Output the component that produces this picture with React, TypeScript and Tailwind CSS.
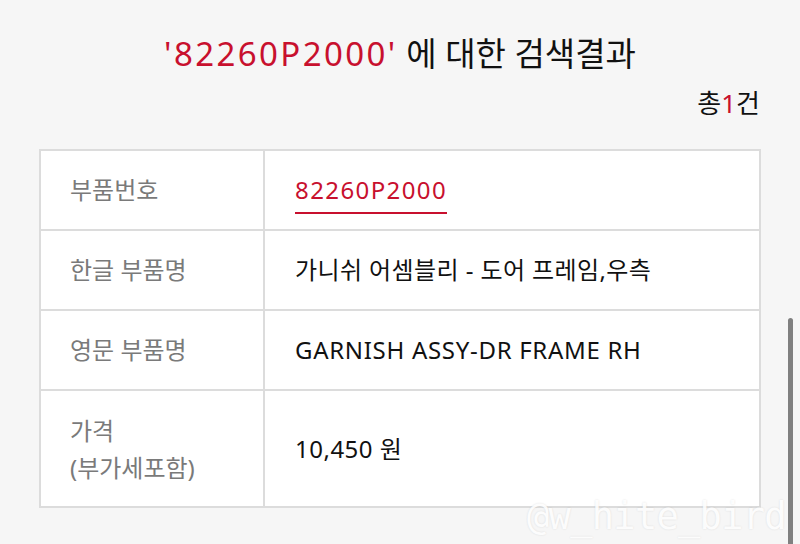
export default function App() {
  const rows = [
    { label: '부품번호', value: '82260P2000', link: true, latin: true },
    { label: '한글 부품명', value: '가니쉬 어셈블리 - 도어 프레임,우측' },
    { label: '영문 부품명', value: 'GARNISH ASSY-DR FRAME RH', latin: true },
  ];

  return (
    <div className="relative w-[800px] h-[544px] overflow-hidden bg-[#f6f6f6] font-['Noto_Sans','Noto_Sans_CJK_KR',sans-serif]">
      {/* Title */}
      <div className="pt-[32px] text-center text-[33px] leading-[44px] text-[#111]">
        <span className="text-[#c8102e] tracking-[2.4px]">'82260P2000'</span> 에 대한 검색결과
      </div>

      {/* Count */}
      <div className="mt-[10px] pr-[40px] text-right text-[26px] leading-[34px] text-[#111]">
        총<span className="text-[#c8102e]">1</span>건
      </div>

      {/* Table */}
      <div className="mx-[39px] mt-[29px] w-[722px] border-2 border-[#dcdcdc] bg-white">
        {rows.map((r) => (
          <div key={r.label} className="flex h-[80px] border-b-2 border-[#dcdcdc]">
            <div className="flex w-[224px] items-center border-r-2 border-[#dcdcdc] pl-[29px] text-[24px] text-[#7a7a7a]">
              {r.label}
            </div>
            <div
              className={`flex flex-1 items-center pl-[30px] text-[24px] text-[#111] ${r.link ? 'tracking-[1.4px]' : r.latin ? 'tracking-[0.7px]' : 'tracking-[0.4px]'}`}
            >
              {r.link ? (
                <span className="border-b-2 border-[#c8102e] pb-[4px] text-[#c8102e] translate-y-[3px]">
                  {r.value}
                </span>
              ) : (
                r.value
              )}
            </div>
          </div>
        ))}
        <div className="flex h-[115px]">
          <div className="flex w-[224px] flex-col justify-center border-r-2 border-[#dcdcdc] pl-[29px] text-[24px] leading-[37px] text-[#7a7a7a]">
            <span>가격</span>
            <span>(부가세포함)</span>
          </div>
          <div className="flex flex-1 items-center pl-[30px] text-[24px] tracking-[0.5px] text-[#111]">10,450 원</div>
        </div>
      </div>

      {/* Scrollbar */}
      <div className="absolute right-[7px] top-[318px] h-[230px] w-[5px] rounded-full bg-[#808080]" />

      {/* Watermark */}
      <div className="absolute left-[527px] top-[496px] font-['DejaVu_Sans_Mono',monospace] text-[37px] leading-[42px] tracking-[-0.7px] text-white/90 [text-shadow:0_0_2px_rgba(0,0,0,0.12)]">
        @w_hite_bird
      </div>
    </div>
  );
}
